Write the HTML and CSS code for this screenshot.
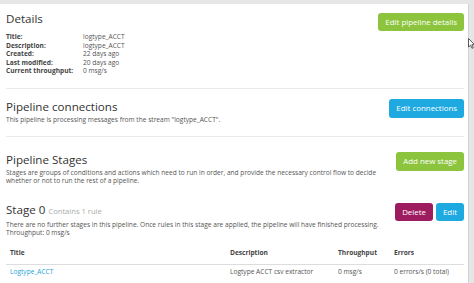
FILE: index.html
```html
<!DOCTYPE html>
<html lang="en">
<head>
  <meta charset="UTF-8">
  <meta name="viewport" content="width=device-width, initial-scale=1.0">
  <title>Pipeline logtype_ACCT</title>
  <link rel="stylesheet" href="styles.css">
</head>
<body>
  <main class="page">
    <section class="block">
      <div class="blockBody">
        <h2>Details</h2>
        <dl class="details">
          <dt>Title:</dt><dd>logtype_ACCT</dd>
          <dt>Description:</dt><dd>logtype_ACCT</dd>
          <dt>Created:</dt><dd>22 days ago</dd>
          <dt>Last modified:</dt><dd>20 days ago</dd>
          <dt>Current throughput:</dt><dd>0 msg/s</dd>
        </dl>
      </div>
      <button class="btn btnGreen">Edit pipeline details</button>
    </section>

    <section class="block">
      <div class="blockBody">
        <h2>Pipeline connections</h2>
        <p>This pipeline is processing messages from the stream "logtype_ACCT".</p>
      </div>
      <button class="btn btnBlue">Edit connections</button>
    </section>

    <section class="block">
      <div class="blockBody">
        <h2>Pipeline Stages</h2>
        <p>Stages are groups of conditions and actions which need to run in order, and provide the necessary control flow to decide<br>whether or not to run the rest of a pipeline.</p>
      </div>
      <button class="btn btnGreen">Add new stage</button>
    </section>

    <section class="stage">
      <div class="stageHead">
        <div class="blockBody">
          <h2>Stage 0 <small>Contains 1 rule</small></h2>
          <p>There are no further stages in this pipeline. Once rules in this stage are applied, the pipeline will have finished processing.<br>Throughput: 0 msg/s</p>
        </div>
        <div class="actions">
          <button class="btn btnPurple">Delete</button>
          <button class="btn btnBlue">Edit</button>
        </div>
      </div>
      <table>
        <thead>
          <tr>
            <th class="colTitle">Title</th>
            <th class="colDesc">Description</th>
            <th class="colThroughput">Throughput</th>
            <th>Errors</th>
          </tr>
        </thead>
        <tbody>
          <tr>
            <td><a href="#">Logtype_ACCT</a></td>
            <td>Logtype ACCT csv extractor</td>
            <td>0 msg/s</td>
            <td>0 errors/s (0 total)</td>
          </tr>
        </tbody>
      </table>
    </section>
  </main>

  <svg class="cursor" width="7" height="11" viewBox="0 0 7 11">
    <path d="M0.5 0.5 L0.5 9 L2.6 7.2 L4 10.3 L5.3 9.7 L3.9 6.7 L6.5 6.6 Z" fill="#fff" stroke="#333" stroke-width="0.8"/>
  </svg>
</body>
</html>
```

FILE: styles.css
```css
body {
  margin: 0;
  padding-top: 4px;
  background-color: #e6e6e6;
  font-family: "Open Sans", "DejaVu Sans", sans-serif;
  color: #555;
  font-size: 6.6px;
  line-height: 8.6px;
}

.page {
  width: 458px;
  height: 279px;
  padding: 0 4px 0 6px;
  background-color: #fff;
  border-right: 1px solid #d4d4d4;
  overflow: hidden;
}

h2 {
  margin: 0;
  font-size: 11.6px;
  line-height: 15px;
  font-weight: 400;
  color: #333;
}

h2 small {
  font-size: 7.6px;
  color: #aaa;
}

p {
  margin: 0;
  white-space: nowrap;
}

.block {
  display: flex;
  justify-content: space-between;
  align-items: flex-start;
  border-bottom: 1px solid #ebebeb;
}

.blockBody {
  min-width: 0;
}

.block:first-child {
  padding: 7px 0 12px;
}

.block:nth-child(2) {
  padding: 10px 0 11px;
}

.block:nth-child(3) {
  padding: 15px 0 16px;
  border-bottom: none;
}

.blockBody h2 {
  margin-bottom: 2px;
}

.details {
  display: grid;
  grid-template-columns: 77px auto;
  margin: 7px 0 0;
}

.details dt {
  font-weight: 700;
  color: #444;
}

.details dd {
  margin: 0;
}

.btn {
  flex-shrink: 0;
  border: none;
  border-radius: 3px;
  color: #fff;
  font-family: inherit;
  font-size: 7.9px;
  line-height: 19px;
  padding: 0 7px;
  white-space: nowrap;
  cursor: pointer;
}

.block:first-child .btn {
  margin-top: 2px;
  line-height: 18px;
}

.btnGreen {
  background-color: #8cc43e;
}

.btnBlue {
  background-color: #1ea9e1;
}

.btnPurple {
  background-color: #9c1c5f;
}

.stageHead {
  display: flex;
  justify-content: space-between;
  align-items: flex-start;
}

.actions {
  display: flex;
  flex-shrink: 0;
  gap: 3px;
  margin-top: 1px;
}

.actions .btn {
  line-height: 18px;
}

table {
  width: 458px;
  margin-top: 11px;
  border-collapse: collapse;
  table-layout: fixed;
}

th,
td {
  box-sizing: border-box;
  text-align: left;
  padding: 0 4px;
  white-space: nowrap;
}

th {
  font-weight: 700;
  color: #444;
  padding-bottom: 6px;
  border-bottom: 1px solid #ddd;
}

td {
  padding-top: 3px;
}

.colTitle {
  width: 220px;
}

.colDesc {
  width: 108px;
}

.colThroughput {
  width: 56px;
}

a {
  color: #1e9fd8;
  text-decoration: none;
}

.cursor {
  position: absolute;
  left: 468px;
  top: 38px;
}
```
